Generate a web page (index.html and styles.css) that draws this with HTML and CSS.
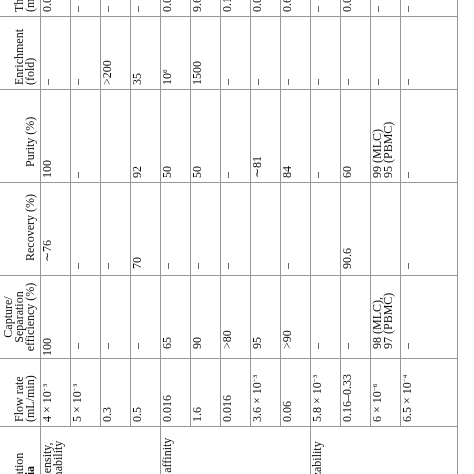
FILE: index.html
```html
<!DOCTYPE html>
<html lang="en">
<head>
<meta charset="utf-8">
<title>Cell separation methods</title>
<link rel="stylesheet" href="styles.css">
</head>
<body>
<div class="stage">
<table class="tbl">
<colgroup>
<col class="c-cat"><col class="c-flow"><col class="c-cap"><col class="c-rec"><col class="c-pur"><col class="c-enr"><col class="c-thr">
</colgroup>
<thead>
<tr class="head">
<th>Separation<br><b>criteria</b></th>
<th>Flow rate<br>(mL/min)</th>
<th class="h-cap">Capture/<br>Separation<br>efficiency (%)</th>
<th class="h-rec">Recovery (%)</th>
<th class="h-pur">Purity (%)</th>
<th>Enrichment<br>(fold)</th>
<th>Throughput<br>(mL/h)</th>
</tr>
</thead>
<tbody>
<tr class="row">
<td class="cat" rowspan="4">Size, density, deformability</td>
<td>4 × 10<sup>−3</sup></td><td class="cap near">100</td><td class="rec far">∼76</td><td>100</td><td>–</td><td>0.0024</td>
</tr>
<tr class="row">
<td>5 × 10<sup>−3</sup></td><td class="cap">–</td><td class="rec">–</td><td>–</td><td>–</td><td>–</td>
</tr>
<tr class="row">
<td>0.3</td><td class="cap">–</td><td class="rec">–</td><td></td><td>&gt;200</td><td>–</td>
</tr>
<tr class="row">
<td>0.5</td><td class="cap">–</td><td class="rec">70</td><td>92</td><td>35</td><td>–</td>
</tr>
<tr class="row">
<td class="cat" rowspan="5">Target affinity</td>
<td>0.016</td><td class="cap">65</td><td class="rec">–</td><td>50</td><td>10<sup>6</sup></td><td>0.0096</td>
</tr>
<tr class="row">
<td>1.6</td><td class="cap">90</td><td class="rec">–</td><td>50</td><td>1500</td><td>9.6</td>
</tr>
<tr class="row">
<td>0.016</td><td class="cap">&gt;80</td><td class="rec">–</td><td>–</td><td>–</td><td>0.16</td>
</tr>
<tr class="row">
<td>3.6 × 10<sup>−3</sup></td><td class="cap">95</td><td class="rec"></td><td>∼81</td><td>–</td><td>0.0022</td>
</tr>
<tr class="row">
<td>0.06</td><td class="cap">&gt;90</td><td class="rec">–</td><td>84</td><td>–</td><td>0.6</td>
</tr>
<tr class="row">
<td class="cat" rowspan="4">Polarizability</td>
<td>5.8 × 10<sup>−3</sup></td><td class="cap">–</td><td class="rec"></td><td>–</td><td>–</td><td>–</td>
</tr>
<tr class="row">
<td>0.16–0.33</td><td class="cap">–</td><td class="rec">90.6</td><td>60</td><td>–</td><td>0.01–0.02</td>
</tr>
<tr class="row">
<td>6 × 10<sup>−6</sup></td><td class="cap">98 (MLC),<br>97 (PBMC)</td><td class="rec"></td><td>99 (MLC)<br>95 (PBMC)</td><td>–</td><td>–</td>
</tr>
<tr class="row last">
<td>6.5 × 10<sup>−4</sup></td><td class="cap">–</td><td class="rec">–</td><td>–</td><td>–</td><td>–</td>
</tr>
</tbody>
</table>
</div>
</body>
</html>
```

FILE: styles.css
```css
html, body {
  margin: 0;
  padding: 0;
  overflow: hidden;
  background: #ffffff;
}

.stage {
  width: 474px;
  height: 474px;
  overflow: hidden;
}

/* The table is typeset normally, then turned a quarter-turn
   counter-clockwise, as in the scanned page. */
.tbl {
  border-collapse: collapse;
  table-layout: fixed;
  width: 569px;
  transform-origin: 0 0;
  transform: translateY(509px) rotate(-90deg);
  will-change: transform;
  font-family: "Liberation Serif", "Times New Roman", serif;
  font-size: 12px;
  line-height: 11px;
  color: #0e0e0e;
}

.c-cat { width: 82px; }
.c-flow { width: 68px; }
.c-cap { width: 83px; }
.c-rec { width: 93px; }
.c-pur { width: 93px; }
.c-enr { width: 73px; }
.c-thr { width: 77px; }

.tbl td,
.tbl th {
  border: 1px solid #969696;
  padding: 1px 2px 0 4px;
  text-align: left;
  vertical-align: top;
  font-weight: normal;
  white-space: nowrap;
  overflow: hidden;
}

.tbl th {
  vertical-align: bottom;
  padding-bottom: 4px;
  border-top: none;
}

.tbl th b {
  font-weight: bold;
}

.tbl th.h-cap {
  text-align: center;
  padding-left: 2px;
}
.tbl th.h-rec { padding-left: 14px; }
.tbl th.h-pur { padding-left: 15px; }

.head { height: 40px; }
.row { height: 30px; }
.row.last { height: 57px; }

.tbl td.cat {
  white-space: normal;
  padding-left: 2px;
}

.tbl td.cap { padding-left: 9px; }
.tbl td.cap.near { padding-left: 2px; }
.tbl td.rec { padding-left: 6px; }
.tbl td.rec.far { padding-left: 13px; }

.tbl sup {
  font-size: 7px;
  line-height: 0;
  vertical-align: 4px;
}
```
